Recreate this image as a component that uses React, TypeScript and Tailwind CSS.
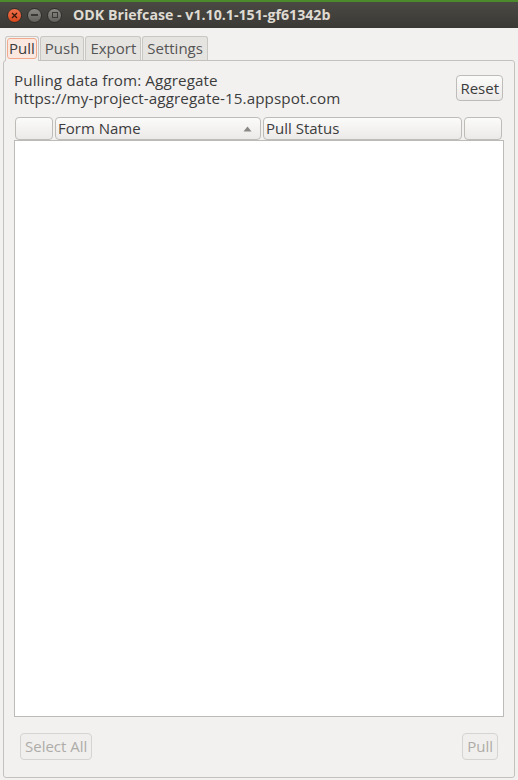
import React from "react";

const font = { fontFamily: '"Open Sans", "DejaVu Sans", sans-serif' };

function TitleBar() {
  return (
    <div className="h-[28px] flex items-center bg-gradient-to-b from-[#4a4944] to-[#3a3935] border-t-2 border-[#4c8a2b]">
      <div className="flex items-center gap-[5px] pl-[7px]">
        <div className="w-[15px] h-[15px] rounded-full bg-gradient-to-b from-[#f2714a] to-[#d8471c] border border-[#2f2e2a] flex items-center justify-center">
          <svg width="7" height="7" viewBox="0 0 7 7">
            <path d="M1 1L6 6M6 1L1 6" stroke="#3a1a0c" strokeWidth="1.4" />
          </svg>
        </div>
        <div className="w-[15px] h-[15px] rounded-full bg-gradient-to-b from-[#8a8984] to-[#62615c] border border-[#2f2e2a] flex items-center justify-center">
          <div className="w-[7px] h-[2px] bg-[#3a3935]" />
        </div>
        <div className="w-[15px] h-[15px] rounded-full bg-gradient-to-b from-[#8a8984] to-[#62615c] border border-[#2f2e2a] flex items-center justify-center">
          <div className="w-[6px] h-[6px] border border-[#3a3935]" />
        </div>
      </div>
      <div className="ml-[11px] text-[14.2px] font-bold text-[#dfdbd2]">
        ODK Briefcase - v1.10.1-151-gf61342b
      </div>
    </div>
  );
}

function Tabs() {
  const tabs = ["Pull", "Push", "Export", "Settings"];
  return (
    <div className="flex pl-[5px] pt-[7px]">
      {tabs.map((t, i) =>
        i === 0 ? (
          <div key={t} className="h-[25px] px-[1px] pt-[1px] bg-[#f2f1f0] border border-b-0 border-[#c9c7c3] rounded-t-[3px] relative top-[1px]">
            <div className="h-[21px] px-[1px] flex items-center border border-[#f3a98c] bg-[#fbe9e1] rounded-[3px] text-[15px] text-[#3c3c3c]">
              {t}
            </div>
          </div>
        ) : (
          <div
            key={t}
            className="h-[24px] mt-[1px] ml-[1px] px-[4px] flex items-center bg-[#e6e4e1] border border-b-0 border-[#c9c7c3] rounded-t-[3px] text-[15px] text-[#555]"
          >
            {t}
          </div>
        )
      )}
    </div>
  );
}

function HeaderCell({ children, className }: { children?: React.ReactNode; className: string }) {
  return (
    <div
      className={`h-[23px] flex items-center px-[2px] rounded-[4px] border border-[#bebcb8] bg-gradient-to-b from-[#fbfbfa] to-[#eceae8] text-[15px] text-[#3c3c3c] ${className}`}
    >
      {children}
    </div>
  );
}

export default function App() {
  return (
    <div className="w-[518px] h-[780px] bg-[#f2f1f0] flex flex-col overflow-hidden" style={font}>
      <TitleBar />
      <Tabs />
      <div className="mx-[3px] flex-1 mb-[2px] border border-[#c4c2be] rounded-[3px] flex flex-col px-[10px] pt-[10px] pb-[17px]">
        <div className="flex justify-between">
          <div className="text-[15.2px] tracking-[0.1px] leading-[18px] text-[#3c3c3c]">
            <div>Pulling data from: Aggregate</div>
            <div>https://my-project-aggregate-15.appspot.com</div>
          </div>
          <div className="mt-[4px] mr-[1px] h-[26px] px-[3px] flex items-center rounded-[4px] border border-[#bebcb8] bg-gradient-to-b from-[#fbfbfa] to-[#eceae8] text-[15px] text-[#3c3c3c]">
            Reset
          </div>
        </div>
        <div className="mt-[10px] flex gap-[2px] pl-[1px] pr-[2px]">
          <HeaderCell className="w-[38px]" />
          <HeaderCell className="w-[206px] justify-between pr-[8px]">
            <span>Form Name</span>
            <svg width="9" height="6" viewBox="0 0 9 6">
              <path d="M4.5 0.5L8.5 5.5H0.5Z" fill="#8a8884" />
            </svg>
          </HeaderCell>
          <HeaderCell className="flex-1">Pull Status</HeaderCell>
          <HeaderCell className="w-[38px]" />
        </div>
        <div className="flex-1 bg-white border border-[#bdbbb7]" />
        <div className="mt-[16px] flex justify-between px-[6px]">
          <div className="h-[27px] px-[4px] flex items-center rounded-[4px] border border-[#d6d4d0] bg-[#f0efed] text-[15px] text-[#aeaca8]">
            Select All
          </div>
          <div className="h-[27px] px-[4px] flex items-center rounded-[4px] border border-[#d6d4d0] bg-[#f0efed] text-[15px] text-[#aeaca8]">
            Pull
          </div>
        </div>
      </div>
    </div>
  );
}
